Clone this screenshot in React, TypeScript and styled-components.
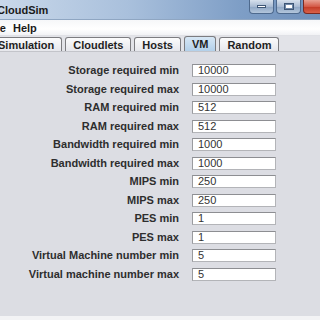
import React from "react";
import styled, { createGlobalStyle } from "styled-components";

const fields: [string, string][] = [
  ["Storage required min", "10000"],
  ["Storage required max", "10000"],
  ["RAM required min", "512"],
  ["RAM required max", "512"],
  ["Bandwidth required min", "1000"],
  ["Bandwidth required max", "1000"],
  ["MIPS min", "250"],
  ["MIPS max", "250"],
  ["PES min", "1"],
  ["PES max", "1"],
  ["Virtual Machine number min", "5"],
  ["Virtual machine number max", "5"],
];

const tabs = ["Simulation", "Cloudlets", "Hosts", "VM", "Random"];

function App() {
  return (
    <>
      <GlobalStyle />
      <Window>
        <TitleBar>
          <Title>CloudSim</Title>
          <Controls>
            <CtrlButton>
              <MinGlyph />
            </CtrlButton>
            <CtrlButton>
              <MaxGlyph />
            </CtrlButton>
            <CloseButton />
          </Controls>
        </TitleBar>
        <MenuBar>
          <MenuItem>File</MenuItem>
          <MenuItem>Help</MenuItem>
        </MenuBar>
        <TabStrip>
          {tabs.map((t) => (
            <Tab key={t} $active={t === "VM"}>
              {t}
            </Tab>
          ))}
        </TabStrip>
        <Panel>
          <Form>
            {fields.map(([label, value]) => (
              <React.Fragment key={label}>
                <Label>{label}</Label>
                <Field>{value}</Field>
              </React.Fragment>
            ))}
          </Form>
        </Panel>
        <BottomStrip />
      </Window>
    </>
  );
}

export default App;

const GlobalStyle = createGlobalStyle`
  html, body {
    margin: 0;
    padding: 0;
    overflow: hidden;
    background: #dcdde3;
  }
  * { box-sizing: border-box; }
`;

const Window = styled.div`
  width: 320px;
  height: 320px;
  display: flex;
  flex-direction: column;
  overflow: hidden;
  font-family: "Liberation Sans", Arial, sans-serif;
  color: #222;
`;

const TitleBar = styled.div`
  height: 20px;
  display: flex;
  align-items: flex-start;
  justify-content: space-between;
  background: linear-gradient(90deg, #c9d8ea 0%, #a9c0dc 40%, #7e9ec6 75%, #6f90bb 100%);
  border-bottom: 1px solid #8fa6c2;
`;

const Title = styled.div`
  margin-left: -3px;
  margin-top: 4px;
  font-size: 11px;
  font-weight: bold;
  color: #1a1a1a;
`;

const Controls = styled.div`
  display: flex;
  gap: 2px;
  margin-right: -8px;
`;

const CtrlButton = styled.div`
  width: 25px;
  height: 14px;
  display: flex;
  align-items: center;
  justify-content: center;
  border: 1px solid #4e6a8e;
  border-top: none;
  border-radius: 0 0 4px 4px;
  background: linear-gradient(180deg, #d6e0ec 0%, #a9bbd3 50%, #8ea6c4 51%, #b3c6dc 100%);
`;

const MinGlyph = styled.div`
  width: 9px;
  height: 3px;
  background: #fff;
  border: 1px solid #3e5675;
`;

const MaxGlyph = styled.div`
  width: 10px;
  height: 7px;
  background: #fff;
  border: 1px solid #3e5675;
  box-shadow: inset 0 0 0 1px #6f88a8;
`;

const CloseButton = styled.div`
  width: 25px;
  height: 14px;
  border: 1px solid #7a2a22;
  border-top: none;
  border-radius: 0 0 4px 4px;
  background: linear-gradient(180deg, #e8a193 0%, #d45a47 50%, #c23a25 51%, #d8614a 100%);
`;

const MenuBar = styled.div`
  height: 16px;
  display: flex;
  align-items: center;
  gap: 7px;
  margin-left: -13px;
  background: linear-gradient(180deg, #f6f7f9 0%, #ffffff 60%, #f1f2f5 100%);
  border-bottom: 1px solid #e0e1e6;
`;

const MenuItem = styled.div`
  font-size: 11px;
  font-weight: bold;
  color: #1a1a1a;
`;

const TabStrip = styled.div`
  height: 15px;
  display: flex;
  align-items: flex-end;
  gap: 3px;
  margin-left: -10px;
  background: #e2e3e8;
`;

const Tab = styled.div<{ $active: boolean }>`
  height: ${(p) => (p.$active ? 15 : 14)}px;
  padding: 0 7px;
  display: flex;
  align-items: center;
  font-size: 11px;
  font-weight: bold;
  color: #1f1f1f;
  border: 1px solid #7c7c80;
  border-bottom: none;
  border-radius: 3px 3px 0 0;
  background: ${(p) =>
    p.$active
      ? "linear-gradient(180deg, #d7e7f5 0%, #b3d0ea 100%)"
      : "linear-gradient(180deg, #fbfbfc 0%, #e6e7ec 100%)"};
`;

const Panel = styled.div`
  flex: 1;
  background: #dcdde3;
  border-top: 1px solid #c3c4ca;
  padding-top: 12px;
`;

const Form = styled.div`
  display: grid;
  grid-template-columns: 179px 84px;
  column-gap: 13px;
  row-gap: 5.5px;
`;

const Label = styled.div`
  height: 13px;
  line-height: 13px;
  text-align: right;
  font-size: 11px;
  font-weight: bold;
  color: #2e2e2e;
  white-space: nowrap;
`;

const Field = styled.div`
  height: 13px;
  line-height: 11px;
  padding-left: 5px;
  font-size: 11px;
  color: #333;
  background: #fff;
  border: 1px solid #b3b4b8;
  border-top-color: #8d8e92;
  border-left-color: #9a9b9f;
`;

const BottomStrip = styled.div`
  height: 4px;
  background: #f3f3f5;
`;
